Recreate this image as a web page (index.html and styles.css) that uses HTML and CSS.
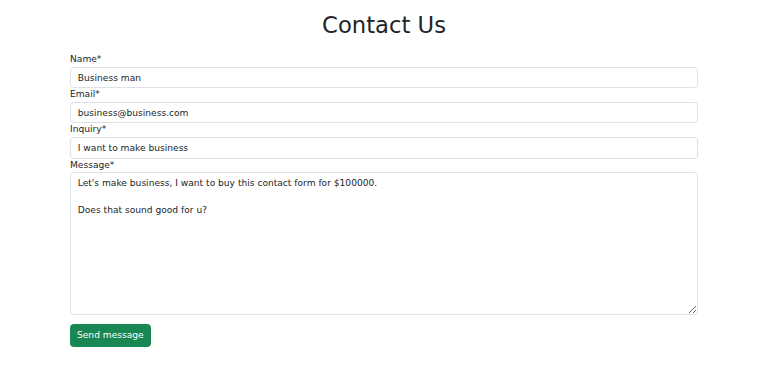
FILE: index.html
```html
<!DOCTYPE html>
<html lang="en">
<head>
    <meta charset="UTF-8">
    <meta name="viewport" content="width=device-width, initial-scale=1.0">
    <title>Contact Us</title>
    <link rel="stylesheet" href="styles.css">
</head>
<body>
    <div class="container">
        <h1>Contact Us</h1>
        <form class="contact-form">
            <label for="name">Name*</label>
            <input type="text" id="name" value="Business man">
            <label for="email">Email*</label>
            <input type="text" id="email" value="business@business.com">
            <label for="inquiry">Inquiry*</label>
            <input type="text" id="inquiry" value="I want to make business">
            <label for="message">Message*</label>
            <textarea id="message">Let's make business, I want to buy this contact form for $100000.

Does that sound good for u?</textarea>
            <button type="button">Send message</button>
        </form>
    </div>
</body>
</html>
```
FILE: styles.css
```css
body {
    font-family: "DejaVu Sans", sans-serif;
    font-size: 9.1px;
    line-height: 1.5;
    margin: 0;
    color: #212529;
    background-color: white;
}
.container {
    width: 628px;
    margin: 0 auto;
    padding-top: 12px;
}
h1 {
    font-size: 22.7px;
    font-weight: 500;
    text-align: center;
    margin: 0 0 14px 0;
    line-height: 1.2;
}
.contact-form {
    display: flex;
    flex-direction: column;
}
label {
    height: 13.6px;
}
input[type="text"], textarea {
    font-family: "DejaVu Sans", sans-serif;
    font-size: 9.1px;
    line-height: 1.5;
    color: #212529;
    border: 1px solid #dee2e6;
    border-radius: 3.5px;
    padding: 3.4px 6.8px;
    height: 21.5px;
    margin: 0;
    box-sizing: border-box;
}
textarea {
    height: 143px;
    resize: vertical;
}
button {
    align-self: flex-start;
    margin-top: 9px;
    background-color: #198754;
    color: white;
    border: 1px solid #198754;
    border-radius: 3.5px;
    font-family: "DejaVu Sans", sans-serif;
    font-size: 9.1px;
    line-height: 1.5;
    padding: 3.4px 6px;
    white-space: nowrap;
    cursor: pointer;
}
```
